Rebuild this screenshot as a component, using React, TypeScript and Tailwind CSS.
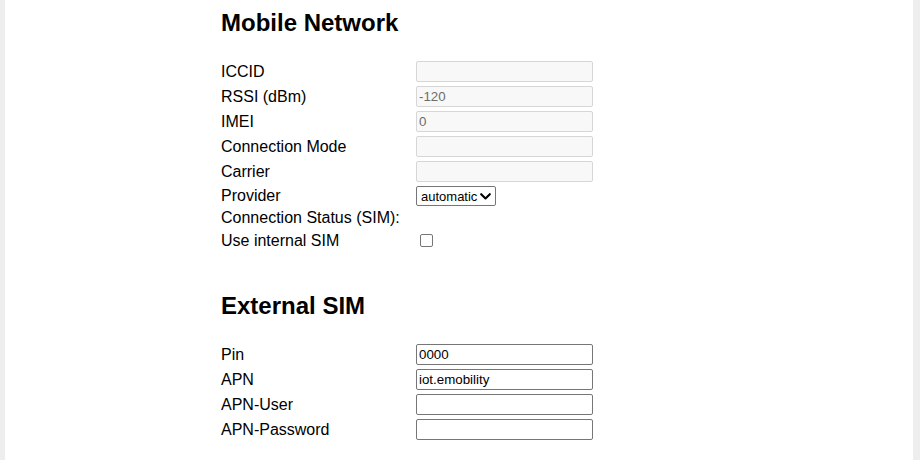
import * as React from "react";

type Row =
  | { kind: "text"; label: string; value: string; disabled?: boolean; mt: string }
  | { kind: "select"; label: string; value: string; mt: string }
  | { kind: "plain"; label: string; mt: string }
  | { kind: "check"; label: string; mt: string };

const mobileRows: Row[] = [
  { kind: "text", label: "ICCID", value: "", disabled: true, mt: "mt-[24px]" },
  { kind: "text", label: "RSSI (dBm)", value: "-120", disabled: true, mt: "mt-[4px]" },
  { kind: "text", label: "IMEI", value: "0", disabled: true, mt: "mt-[4px]" },
  { kind: "text", label: "Connection Mode", value: "", disabled: true, mt: "mt-[4px]" },
  { kind: "text", label: "Carrier", value: "", disabled: true, mt: "mt-[4px]" },
  { kind: "select", label: "Provider", value: "automatic", mt: "mt-[4px]" },
  { kind: "plain", label: "Connection Status (SIM):", mt: "mt-[3px]" },
  { kind: "check", label: "Use internal SIM", mt: "mt-[4px]" },
];

const simRows: Row[] = [
  { kind: "text", label: "Pin", value: "0000", mt: "mt-[24px]" },
  { kind: "text", label: "APN", value: "iot.emobility", mt: "mt-[4px]" },
  { kind: "text", label: "APN-User", value: "", mt: "mt-[4px]" },
  { kind: "text", label: "APN-Password", value: "", mt: "mt-[4px]" },
];

const labelCls = "w-[195px] shrink-0 text-[16px] leading-[16px]";

function Field({ row }: { row: Row }) {
  if (row.kind === "text") {
    return (
      <div className={`${row.mt} flex h-[21px] items-center`}>
        <span className={labelCls}>{row.label}</span>
        <input
          readOnly
          disabled={row.disabled}
          value={row.value}
          className={
            row.disabled
              ? "h-[21px] w-[177px] rounded-[2px] border border-[#d6d6d6] bg-[#f8f8f8] px-[2px] text-[13.33px] leading-[15px] text-[#6d6d6d]"
              : "h-[21px] w-[177px] rounded-[2px] border border-[#767676] bg-white px-[2px] text-[13.33px] leading-[15px] text-black"
          }
        />
      </div>
    );
  }
  if (row.kind === "select") {
    return (
      <div className={`${row.mt} flex h-[20px] items-center`}>
        <span className={labelCls}>{row.label}</span>
        <div className="flex h-[20px] w-[80px] items-center justify-between rounded-[2px] border border-[#767676] bg-white pl-[4px] pr-[4px] text-[13px] leading-[15px]">
          <span>{row.value}</span>
          <svg width="11" height="7" viewBox="0 0 11 7" aria-hidden>
            <path d="M1.2 1.2 L5.5 5.5 L9.8 1.2" fill="none" stroke="#000" strokeWidth="2.1" strokeLinecap="round" strokeLinejoin="round" />
          </svg>
        </div>
      </div>
    );
  }
  if (row.kind === "check") {
    return (
      <div className={`${row.mt} flex h-[19px] items-center`}>
        <span className={labelCls}>{row.label}</span>
        <span className="ml-[4px] h-[13px] w-[13px] rounded-[2px] border border-[#767676] bg-white" />
      </div>
    );
  }
  return (
    <div className={`${row.mt} flex h-[18px] items-center`}>
      <span className="text-[16px] leading-[18px]">{row.label}</span>
    </div>
  );
}

export default function App() {
  return (
    <div className="flex h-[460px] w-[920px] bg-[#eeeeee] pl-[5px] pr-[7px] font-['Liberation_Sans',Arial,sans-serif] text-black">
      <div className="h-full flex-1 bg-white pl-[216px] pt-[9px]">
        <h2 className="text-[24px] font-bold leading-[28px]">Mobile Network</h2>
        {mobileRows.map((r) => (
          <Field key={r.label} row={r} />
        ))}

        <h2 className="mt-[42px] text-[24px] font-bold leading-[28px]">External SIM</h2>
        {simRows.map((r) => (
          <Field key={r.label} row={r} />
        ))}
      </div>
    </div>
  );
}
